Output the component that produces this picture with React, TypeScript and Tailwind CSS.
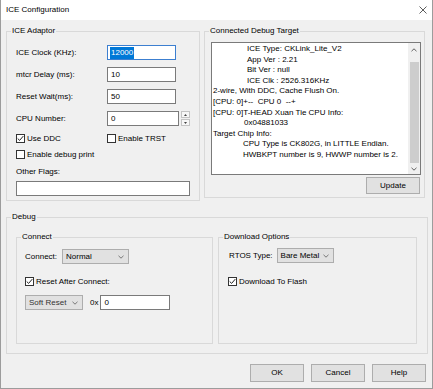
import { ReactNode } from "react";

const Check = ({ checked }: { checked?: boolean }) => (
  <span className="w-[9px] h-[9px] border border-[#333333] bg-white flex items-center justify-center shrink-0">
    {checked && (
      <svg width="7" height="7" viewBox="0 0 7 7">
        <path d="M0.7 3.5 L2.6 5.4 L6.3 1.1" fill="none" stroke="#222222" strokeWidth="1" />
      </svg>
    )}
  </span>
);

const CheckRow = ({ checked, label }: { checked?: boolean; label: string }) => (
  <div className="flex items-center gap-[2px]">
    <Check checked={checked} />
    <span>{label}</span>
  </div>
);

const Chevron = () => (
  <svg width="6" height="4" viewBox="0 0 6 4">
    <path d="M0.5 0.8 L3 3.2 L5.5 0.8" fill="none" stroke="#6b6b6b" strokeWidth="0.9" />
  </svg>
);

const Select = ({ value, className }: { value: string; className: string }) => (
  <div
    className={
      "h-[15px] bg-[#e1e1e1] border border-[#adadad] flex items-center justify-between pl-[3px] pr-[4px] " +
      className
    }
  >
    <span>{value}</span>
    <Chevron />
  </div>
);

const Field = ({ children, className }: { children?: ReactNode; className: string }) => (
  <div className={"h-[15px] bg-white border flex items-center pl-[2px] " + className}>{children}</div>
);

const Group = ({
  title,
  className,
  children,
}: {
  title: string;
  className: string;
  children: ReactNode;
}) => (
  <fieldset className={"border border-[#d9d9d9] shrink-0 " + className}>
    <legend className="ml-[4px] px-[1px] leading-[10px]">{title}</legend>
    {children}
  </fieldset>
);

const Button = ({ label, className }: { label: string; className: string }) => (
  <div
    className={
      "bg-[#e1e1e1] border border-[#adadad] flex items-center justify-center " + className
    }
  >
    {label}
  </div>
);

const targetLines: { text: string; indent: string }[] = [
  { text: "ICE Type: CKLink_Lite_V2", indent: "pl-[34px]" },
  { text: "App Ver : 2.21", indent: "pl-[34px]" },
  { text: "Bit Ver : null", indent: "pl-[34px]" },
  { text: "ICE Clk : 2526.316KHz", indent: "pl-[34px]" },
  { text: "2-wire, With DDC, Cache Flush On.", indent: "pl-0" },
  { text: "[CPU: 0]+--  CPU 0  --+", indent: "pl-0" },
  { text: "[CPU: 0]T-HEAD Xuan Tie CPU Info:", indent: "pl-0" },
  { text: "0x04881033", indent: "pl-[31px]" },
  { text: "Target Chip Info:", indent: "pl-0" },
  { text: "CPU Type is CK802G, in LITTLE Endian.", indent: "pl-[30px]" },
  { text: "HWBKPT number is 9, HWWP number is 2.", indent: "pl-[30px]" },
];

export default function App() {
  return (
    <div
      className="w-[433px] h-[389px] overflow-hidden bg-[#f0f0f0] border-x border-b border-[#9c9c9c] text-[8px] text-black flex flex-col"
      style={{ fontFamily: '"Liberation Sans", Arial, sans-serif' }}
    >
      {/* title bar */}
      <div className="h-[20px] bg-white flex items-center justify-between pl-[5px] pr-[5px] shrink-0">
        <span>ICE Configuration</span>
        <svg width="8" height="8" viewBox="0 0 8 8">
          <path d="M0.5 0.5 L7.5 7.5 M7.5 0.5 L0.5 7.5" stroke="#333333" strokeWidth="0.8" />
        </svg>
      </div>

      {/* top row */}
      <div className="flex items-start mt-[6px] ml-[5px] gap-[4px]">
        <Group title="ICE Adaptor" className="w-[194px] h-[175px]">
          <div className="ml-[9px] mt-[9px] flex flex-col">
            <div className="flex items-center h-[15px]">
              <span className="w-[91px]">ICE Clock (KHz):</span>
              <Field className="w-[69px] border-[#3c7fd0]">
                <span className="bg-[#0078d7] text-white px-[1px]">12000</span>
              </Field>
            </div>
            <div className="flex items-center h-[15px] mt-[7px]">
              <span className="w-[91px]">mtcr Delay (ms):</span>
              <Field className="w-[69px] border-[#7a7a7a]">
                <span className="px-[1px]">10</span>
              </Field>
            </div>
            <div className="flex items-center h-[15px] mt-[7px]">
              <span className="w-[91px]">Reset Wait(ms):</span>
              <Field className="w-[69px] border-[#7a7a7a]">
                <span className="px-[1px]">50</span>
              </Field>
            </div>
            <div className="flex items-center h-[15px] mt-[7px]">
              <span className="w-[91px]">CPU Number:</span>
              <Field className="w-[72px] border-[#7a7a7a]">
                <span className="px-[1px]">0</span>
              </Field>
              <div className="ml-[2px] flex flex-col gap-[1px]">
                <div className="w-[9px] h-[7px] border border-[#c4c4c4] bg-[#f7f7f7] flex items-center justify-center">
                  <svg width="3" height="2" viewBox="0 0 3 2">
                    <path d="M0 2 L1.5 0 L3 2 Z" fill="#444444" />
                  </svg>
                </div>
                <div className="w-[9px] h-[7px] border border-[#c4c4c4] bg-[#f7f7f7] flex items-center justify-center">
                  <svg width="3" height="2" viewBox="0 0 3 2">
                    <path d="M0 0 L1.5 2 L3 0 Z" fill="#444444" />
                  </svg>
                </div>
              </div>
            </div>
            <div className="flex items-center h-[15px] mt-[5px]">
              <div className="w-[91px]">
                <CheckRow checked label="Use DDC" />
              </div>
              <CheckRow label="Enable TRST" />
            </div>
            <div className="flex items-center h-[15px] mt-[1px]">
              <CheckRow label="Enable debug print" />
            </div>
            <div className="flex items-center h-[10px] mt-[5px]">
              <span>Other Flags:</span>
            </div>
            <Field className="w-[174px] border-[#7a7a7a] mt-[4px]" />
          </div>
        </Group>

        <Group title="Connected Debug Target" className="w-[221px] h-[172px]">
          <div className="ml-[6px] mt-[6px] w-[210px] h-[133px] border border-[#7a7a7a] bg-white flex">
            <div className="flex-1 pl-[1px] pt-[1px] leading-[10.6px] whitespace-pre">
              {targetLines.map((l) => (
                <div key={l.text} className={l.indent}>
                  {l.text}
                </div>
              ))}
            </div>
            <div className="w-[12px] bg-[#f0f0f0] flex flex-col items-center">
              <div className="h-[14px] flex items-center justify-center">
                <svg width="6" height="4" viewBox="0 0 6 4">
                  <path d="M0.5 3.2 L3 0.8 L5.5 3.2" fill="none" stroke="#606060" strokeWidth="1" />
                </svg>
              </div>
              <div className="h-[5px]" />
              <div className="w-[9px] h-[101px] bg-[#cdcdcd]" />
              <div className="h-[11px] flex items-center justify-center">
                <svg width="6" height="4" viewBox="0 0 6 4">
                  <path d="M0.5 0.8 L3 3.2 L5.5 0.8" fill="none" stroke="#606060" strokeWidth="1" />
                </svg>
              </div>
            </div>
          </div>
          <div className="flex justify-end mt-[2px] mr-[4px]">
            <Button label="Update" className="w-[54px] h-[17px]" />
          </div>
        </Group>
      </div>

      {/* debug */}
      <Group title="Debug" className="ml-[5px] mt-[11px] w-[422px] h-[142px]">
        <div className="flex ml-[9px] mt-[10px] gap-[5px]">
          <Group title="Connect" className="w-[197px] h-[112px]">
            <div className="pl-[8px] flex flex-col">
              <div className="flex items-center mt-[7px] gap-[5px]">
                <span>Connect:</span>
                <Select value="Normal" className="w-[67px]" />
              </div>
              <div className="flex items-center h-[15px] mt-[10px]">
                <CheckRow checked label="Reset After Connect:" />
              </div>
              <div className="flex items-center mt-[6px]">
                <Select value="Soft Reset" className="w-[58px] text-[#333333]" />
                <span className="ml-[7px]">0x</span>
                <Field className="w-[70px] border-[#7a7a7a] ml-[2px]">
                  <span className="px-[1px]">0</span>
                </Field>
              </div>
            </div>
          </Group>
          <Group title="Download Options" className="w-[199px] h-[112px]">
            <div className="flex flex-col">
              <div className="flex items-center mt-[6px] pl-[10px] gap-[4px]">
                <span>RTOS Type:</span>
                <Select value="Bare Metal" className="w-[57px]" />
              </div>
              <div className="flex items-center h-[15px] mt-[11px] pl-[9px]">
                <CheckRow checked label="Download To Flash" />
              </div>
            </div>
          </Group>
        </div>
      </Group>

      {/* dialog buttons */}
      <div className="flex justify-end gap-[7px] mt-[10px] mr-[6px]">
        <Button label="OK" className="w-[54px] h-[18px]" />
        <Button label="Cancel" className="w-[54px] h-[18px]" />
        <Button label="Help" className="w-[54px] h-[18px]" />
      </div>
    </div>
  );
}
